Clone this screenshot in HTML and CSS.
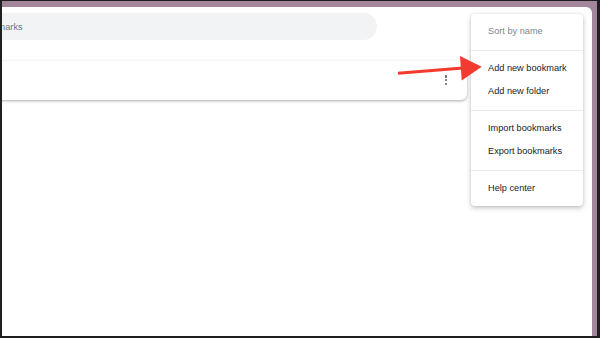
FILE: index.html
```html
<!DOCTYPE html>
<html lang="en">
<head>
<meta charset="utf-8">
<title>Bookmarks</title>
<link rel="stylesheet" href="styles.css">
</head>
<body>
<div class="screen">
  <div class="desktop">
    <div class="window">
      <div class="search"><span class="search-text">Search bookmarks</span></div>
      <div class="card">
        <span class="more"><i></i><i></i><i></i></span>
      </div>
      <div class="menu">
        <div class="item disabled">Sort by name</div>
        <div class="sep"></div>
        <div class="item">Add new bookmark</div>
        <div class="item">Add new folder</div>
        <div class="sep"></div>
        <div class="item">Import bookmarks</div>
        <div class="item">Export bookmarks</div>
        <div class="sep"></div>
        <div class="item">Help center</div>
      </div>
      <svg class="arrow" viewBox="0 0 600 338" width="600" height="338">
        <line x1="398" y1="73.3" x2="463" y2="68" stroke="#f23a2f" stroke-width="3"/>
        <polygon points="460,56 481.7,66.7 461.7,80.5" fill="#f23a2f"/>
      </svg>
    </div>
  </div>
</div>
</body>
</html>
```
FILE: styles.css
```css
* { box-sizing: border-box; }
html, body { margin: 0; padding: 0; }
body {
  font-family: "Liberation Sans", Arial, sans-serif;
  background: #1f1f1f;
}
.screen {
  width: 600px;
  height: 338px;
  background: #1f1f1f;
  padding: 1px 3px 2px 2px;
}
.desktop {
  height: 100%;
  background: #a3869c;
  padding: 6px 5px 0 0;
}
.window {
  position: relative;
  height: 100%;
  background: #ffffff;
  border-top-right-radius: 6px;
  overflow: hidden;
  padding-top: 6px;
}
.search {
  margin-left: -90px;
  width: 465px;
  height: 27px;
  border-radius: 14px;
  background: #f1f3f4;
  padding-left: 34px;
  display: flex;
  align-items: center;
}
.search-text {
  font-size: 9.2px;
  color: #70757a;
}
.card {
  margin-top: 21px;
  margin-left: -20px;
  width: 485px;
  height: 38.5px;
  border-radius: 6px;
  background: #fff;
  box-shadow: 0 1px 2px rgba(60,64,67,0.28), 0 1px 3px 1px rgba(60,64,67,0.12);
  display: flex;
  justify-content: flex-end;
  align-items: center;
  padding-right: 20px;
}
.more {
  display: flex;
  flex-direction: column;
  gap: 1.6px;
}
.more i {
  display: block;
  width: 2.2px;
  height: 2.2px;
  border-radius: 50%;
  background: #5f6368;
}
.menu {
  position: absolute;
  left: 469px;
  top: 7px;
  width: 112px;
  padding: 6px 0;
  background: #fff;
  border-radius: 4px;
  box-shadow: 0 2px 5px rgba(60,64,67,0.3), 0 0 2px rgba(60,64,67,0.15);
}
.item {
  height: 23.5px;
  line-height: 23.5px;
  padding-left: 17px;
  font-size: 9.2px;
  color: #202124;
  white-space: nowrap;
}
.item.disabled { color: #80868b; }
.sep {
  height: 1px;
  background: #e8eaed;
  margin: 6px 0;
}
.arrow {
  position: absolute;
  left: -2px;
  top: -7px;
  pointer-events: none;
}
```
